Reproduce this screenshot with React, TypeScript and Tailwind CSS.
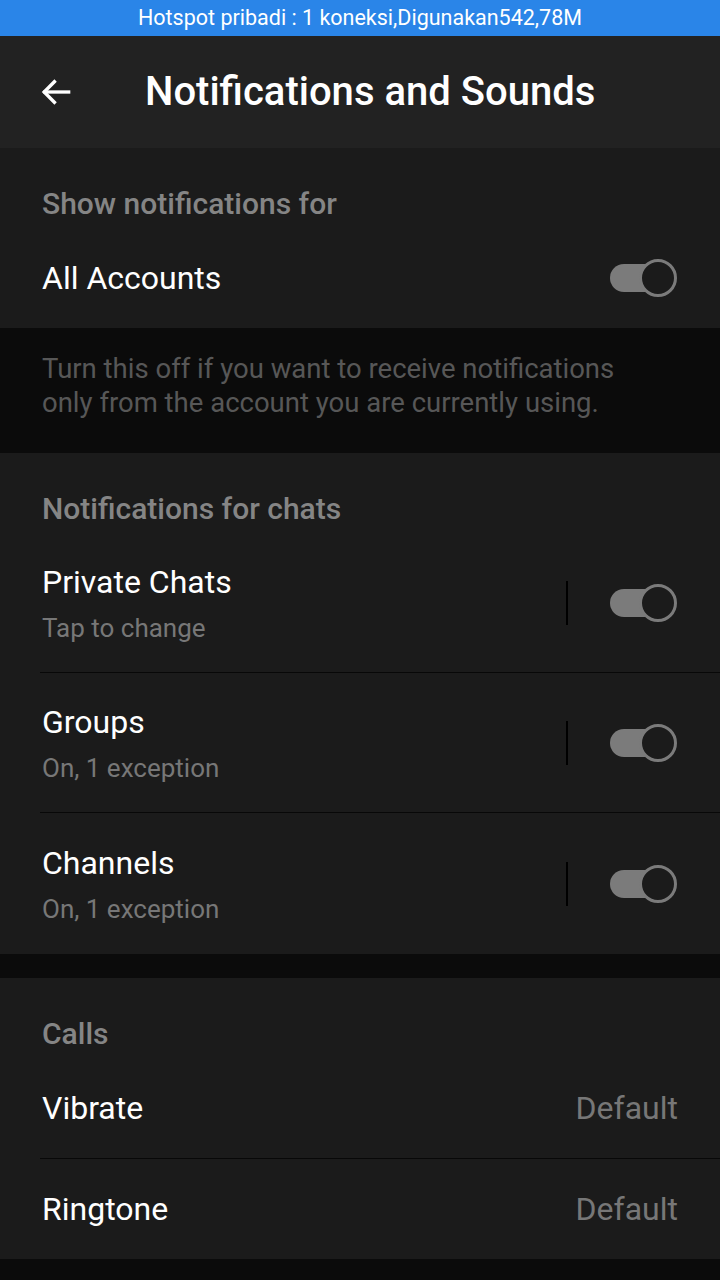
const Toggle = () => (
  <div className="relative w-[70px] h-[40px] flex items-center">
    <div className="ml-[2px] w-[50px] h-[28px] rounded-full bg-[#7b7b7b]" />
    <div className="absolute right-[1px] top-[1px] w-[38px] h-[38px] rounded-full border-[3px] border-[#7b7b7b] bg-[#1b1b1b]" />
  </div>
);

const SectionTitle = ({ children }: { children: string }) => (
  <div className="h-[80px] px-[42px] pt-[38px]">
    <div className="text-[30px] leading-[36px] font-medium text-[#858585]">{children}</div>
  </div>
);

const ChatRow = ({ title, sub, last }: { title: string; sub: string; last?: boolean }) => (
  <div className={`${last ? "h-[141px]" : "h-[139px]"} flex items-center pl-[42px] pr-[42px]`}>
    <div className="flex-1 flex flex-col pt-[2px]">
      <span className="text-[32px] text-white leading-[36px]">{title}</span>
      <span className="text-[26px] text-[#777777] leading-[30px] mt-[13px]">{sub}</span>
    </div>
    <div className="w-[2px] h-[44px] bg-black mr-[40px]" />
    <Toggle />
  </div>
);

const Divider = () => <div className="ml-[40px] h-[1px] bg-[#080808]" />;

export default function App() {
  return (
    <div className="w-[720px] h-[1280px] bg-[#0b0b0b] flex flex-col" style={{ fontFamily: "Roboto, 'Noto Sans', sans-serif" }}>
      <div className="h-[36px] bg-[#2a85e8] flex items-center justify-center">
        <span className="text-[21.5px] text-white">Hotspot pribadi : 1 koneksi,Digunakan542,78M</span>
      </div>
      <div className="h-[112px] bg-[#222222] flex items-center">
        <div className="w-[145px] pl-[37px]">
          <svg width="38" height="38" viewBox="0 0 24 24" fill="none" stroke="white" strokeWidth="2.1" strokeLinecap="square">
            <path d="M20 12H5" />
            <path d="M11 5.5L4.5 12L11 18.5" />
          </svg>
        </div>
        <span className="text-[40px] font-medium text-white">Notifications and Sounds</span>
      </div>

      <div className="bg-[#1b1b1b]">
        <SectionTitle>Show notifications for</SectionTitle>
        <div className="h-[100px] flex items-center pl-[42px] pr-[42px]">
          <span className="flex-1 text-[32px] text-white">All Accounts</span>
          <Toggle />
        </div>
      </div>

      <div className="h-[125px] px-[42px] pt-[24px]">
        <p className="max-w-[600px] text-[27.5px] leading-[34px] text-[#575757]">
          Turn this off if you want to receive notifications only from the account you are currently using.
        </p>
      </div>

      <div className="bg-[#1b1b1b]">
        <SectionTitle>Notifications for chats</SectionTitle>
        <ChatRow title="Private Chats" sub="Tap to change" />
        <Divider />
        <ChatRow title="Groups" sub="On, 1 exception" />
        <Divider />
        <ChatRow title="Channels" sub="On, 1 exception" last />
      </div>

      <div className="h-[24px]" />

      <div className="bg-[#1b1b1b]">
        <SectionTitle>Calls</SectionTitle>
        <div className="h-[100px] flex items-center justify-between pl-[42px] pr-[42px]">
          <span className="text-[32px] text-white">Vibrate</span>
          <span className="text-[32px] text-[#777777]">Default</span>
        </div>
        <Divider />
        <div className="h-[100px] flex items-center justify-between pl-[42px] pr-[42px]">
          <span className="text-[32px] text-white">Ringtone</span>
          <span className="text-[32px] text-[#777777]">Default</span>
        </div>
      </div>
    </div>
  );
}
